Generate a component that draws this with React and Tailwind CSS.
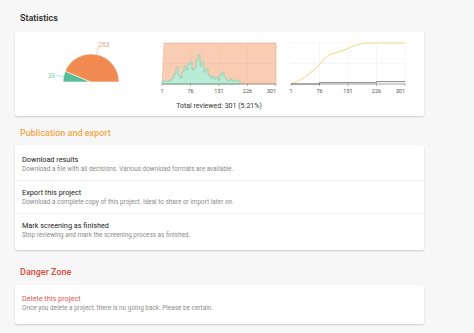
import React from "react";

// green histogram heights (px) every 2px along the plot
const reviewed = [3, 3, 2, 3, 4, 6, 10, 17, 9, 6, 12, 18, 14, 20, 22, 14, 16, 24, 29, 18, 22, 12, 15, 9, 6, 8, 5, 7, 4, 9, 12, 7, 4, 3, 5, 3, 4, 3, 3];

const cumulative = [
    [1, 41], [5, 39], [9, 37], [14, 34], [19, 30], [24, 26], [29, 21], [33, 16], [38, 12], [44, 10], [50, 8], [56, 6], [62, 3], [68, 1.5], [74, 0], [114, 0],
];

const ticks = ["1", "76", "151", "226", "301"];

const Axis = () => (
    <g fontFamily="Roboto, Arial, sans-serif" fontSize="5.5" fill="#555">
        <line x1="4" y1="48" x2="118" y2="48" stroke="#666" strokeWidth="0.6" />
        {ticks.map((t, i) => {
            const x = 4 + i * 28.5;
            return (
                <g key={t}>
                    <line x1={x} y1="48" x2={x} y2="50" stroke="#666" strokeWidth="0.5" />
                    <text x={x} y="57" textAnchor={i === 4 ? "end" : "middle"}>{t}</text>
                </g>
            );
        })}
    </g>
);

const Grid = ({ color }) => (
    <g stroke={color} strokeWidth="0.5" strokeDasharray="1 1">
        {[32.5, 61, 89.5, 118].map((x) => (
            <line key={x} x1={x} y1="7" x2={x} y2="48" />
        ))}
        <line x1="4" y1="7" x2="118" y2="7" />
        <line x1="4" y1="27.5" x2="118" y2="27.5" />
    </g>
);

const PieChart = () => (
    <svg width="136" height="62" className="shrink-0">
        <path d="M69 46 L41 46 A28 28 0 0 1 43.17 35.2 Z" fill="#55bd98" stroke="#fff" strokeWidth="0.6" />
        <path d="M69 46 L43.17 35.2 A28 28 0 0 1 97 46 Z" fill="#f08a50" stroke="#fff" strokeWidth="0.6" />
        <polyline points="74.5,18.5 76.5,10.5 78,10.5" fill="none" stroke="#f3a983" strokeWidth="0.6" />
        <text x="76.5" y="10.5" fontSize="6.5" fill="#f0a07a" fontFamily="Roboto, Arial, sans-serif">263</text>
        <polyline points="41.6,40.5 34,39.5" fill="none" stroke="#82d2b8" strokeWidth="0.6" />
        <text x="33" y="41.5" fontSize="6.5" fill="#7fd0b6" textAnchor="end" fontFamily="Roboto, Arial, sans-serif">38</text>
    </svg>
);

const ProgressChart = () => {
    let d = "M4 48";
    reviewed.forEach((h, i) => {
        const x = 4 + i * 2;
        d += ` V${48 - h} H${x + 2}`;
    });
    d += " V48 Z";
    return (
        <svg width="124" height="62">
            <path d="M4 48 L6 7 L118 7 L118 48 Z" fill="#f9ccb4" stroke="#f4b08c" strokeWidth="0.5" />
            <Grid color="#eab396" />
            <path d={d} fill="#b9ecd7" stroke="#72d2ac" strokeWidth="0.6" />
            <Axis />
        </svg>
    );
};

const CumulativeChart = () => (
    <svg width="124" height="62" className="shrink-0">
        <Grid color="#dcdcdc" />
        <polyline
            points={cumulative.map(([x, y]) => `${4 + x},${7 + y}`).join(" ")}
            fill="none"
            stroke="#f5d36c"
            strokeWidth="0.9"
        />
        <polyline points="4,48 32.5,48 32.5,46.6 89.5,46.6 89.5,45.6 118,45.6" fill="none" stroke="#555" strokeWidth="0.7" />
        <Axis />
    </svg>
);

const Row = ({ title, text, border }) => (
    <div className={`h-[33px] pt-[7px] px-[7px] ${border ? "border-b border-[#eeeeee]" : ""}`}>
        <div className="text-[7.3px] leading-[10px] text-[#222]">{title}</div>
        <div className="text-[6.4px] leading-[9px] text-[#8c8c8c]">{text}</div>
    </div>
);

const Card = ({ className = "", children }) => (
    <div className={`bg-white rounded-[2px] shadow-[0_1px_2px_rgba(0,0,0,0.18)] ${className}`}>{children}</div>
);

export default function App() {
    return (
        <div className="w-[474px] h-[333px] bg-[#f7f7f7] font-[Roboto,Arial,sans-serif] overflow-hidden">
            <div className="w-[409px] ml-[15px]">
                {/* STATISTICS */}
                <h2 className="mt-[11px] mb-[7px] px-[5px] h-[14px] leading-[14px] text-[9px] font-medium text-[#222]">
                    Statistics
                </h2>
                <Card className="h-[84px] pt-[4px] pl-[7px] flex">
                    <PieChart />
                    <div className="flex flex-col w-[124px] shrink-0">
                        <ProgressChart />
                        <div className="mt-[3px] pl-[4px] w-[118px] text-center text-[7px] leading-[10px] text-[#333] whitespace-nowrap">
                            Total reviewed: 301 (5.21%)
                        </div>
                    </div>
                    <div className="w-[5px] shrink-0" />
                    <CumulativeChart />
                </Card>

                {/* PUBLICATION */}
                <h2 className="mt-[10px] mb-[5px] px-[5px] h-[14px] leading-[14px] text-[9px] font-medium text-[#f0a848]">
                    Publication and export
                </h2>
                <Card className="py-[3px]">
                    <Row border title="Download results" text="Download a file with all decisions. Various download formats are available." />
                    <Row border title="Export this project" text="Download a complete copy of this project. Ideal to share or import later on." />
                    <Row title="Mark screening as finished" text="Stop reviewing and mark the screening process as finished." />
                </Card>

                {/* DANGER */}
                <h2 className="mt-[15px] mb-[6px] px-[5px] h-[14px] leading-[14px] text-[9px] font-medium text-[#e24a3b]">
                    Danger Zone
                </h2>
                <Card className="h-[39px] pt-[9px] px-[7px]">
                    <div className="text-[7.3px] leading-[10px] text-[#e35454]">Delete this project</div>
                    <div className="text-[6.4px] leading-[9px] text-[#8c8c8c]">
                        Once you delete a project, there is no going back. Please be certain.
                    </div>
                </Card>
            </div>
        </div>
    );
}
